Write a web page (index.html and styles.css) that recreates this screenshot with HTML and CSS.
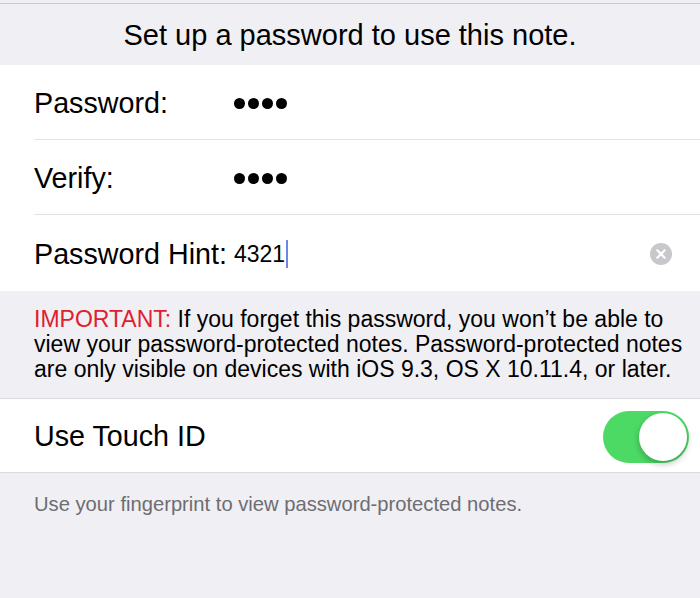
FILE: index.html
```html
<!DOCTYPE html>
<html>
    <head>
        <meta charset="UTF-8">
        <meta name="viewport" content="width=device-width, initial-scale=1.0">
        <title>Lock Note</title>
        <link rel="stylesheet" href="styles.css">
    </head>
    <body>
        <div class="header">Set up a password to use this note.</div>

        <div class="group">
            <div class="row">
                <div class="rowinner">
                    <span class="label">Password:</span>
                    <span class="dots"><i></i><i></i><i></i><i></i></span>
                </div>
            </div>
            <div class="row">
                <div class="rowinner">
                    <span class="label">Verify:</span>
                    <span class="dots"><i></i><i></i><i></i><i></i></span>
                </div>
            </div>
            <div class="row">
                <div class="rowinner last">
                    <span class="label">Password Hint:</span>
                    <span class="value">4321</span><span class="caret"></span>
                    <span class="clear">
                        <svg width="22" height="22" viewBox="0 0 22 22">
                            <circle cx="11" cy="11" r="11" fill="#c7c7cc"/>
                            <path d="M7.3 7.3 L14.7 14.7 M14.7 7.3 L7.3 14.7" stroke="#fff" stroke-width="2.2" stroke-linecap="round"/>
                        </svg>
                    </span>
                </div>
            </div>
        </div>

        <p class="footnote"><span class="important">IMPORTANT:</span> If you forget this password, you won’t be able to view your password-protected notes. Password-protected notes are only visible on devices with iOS 9.3, OS X 10.11.4, or later.</p>

        <div class="group bordered">
            <div class="row">
                <div class="rowinner last">
                    <span class="label">Use Touch ID</span>
                    <span class="switch on"><span class="knob"></span></span>
                </div>
            </div>
        </div>

        <p class="caption">Use your fingerprint to view password-protected notes.</p>
    </body>
</html>
```

FILE: styles.css
```css
* {
    font-family: "Liberation Sans", Arial, sans-serif;
    box-sizing: border-box;
}
body {
    margin: 0;
    background-color: #efeff4;
    color: #000;
}
.header {
    margin-top: 3px;
    border-top: 1px solid #c9c9ce;
    height: 62px;
    display: flex;
    align-items: center;
    justify-content: center;
    font-size: 29px;
    padding-top: 2px;
}
.group {
    background-color: #fff;
}
.bordered {
    border-top: 1px solid #dadadf;
    border-bottom: 1px solid #dadadf;
}
.row {
    padding-left: 34px;
}
.rowinner {
    display: flex;
    align-items: center;
    height: 75px;
    padding-top: 2px;
    border-bottom: 1px solid #e2e2e5;
}
.rowinner.last {
    border-bottom: none;
    height: 76px;
}
.bordered .rowinner.last {
    height: 73px;
}
.label {
    width: 200px;
    flex-shrink: 0;
    font-size: 28.7px;
}
.dots {
    display: flex;
    gap: 3px;
    margin-top: 1px;
}
.dots i {
    width: 11px;
    height: 11px;
    border-radius: 50%;
    background-color: #000;
}
.value {
    font-size: 23px;
}
.caret {
    width: 2px;
    height: 28px;
    margin-left: 1px;
    background-color: #6f86e6;
}
.clear {
    margin-left: auto;
    margin-right: 28px;
    display: flex;
}
.footnote {
    margin: 0;
    padding: 16px 2px 16px 34px;
    font-size: 23px;
    line-height: 25px;
    color: #000;
}
.important {
    color: #e0202e;
}
.switch {
    margin-left: auto;
    margin-right: 11px;
    width: 86px;
    height: 52px;
    border-radius: 26px;
    background-color: #4cd964;
    position: relative;
}
.knob {
    position: absolute;
    top: 2px;
    right: 2px;
    width: 48px;
    height: 48px;
    border-radius: 50%;
    background-color: #fff;
    box-shadow: 0 3px 6px rgba(0, 0, 0, 0.25);
}
.caption {
    margin: 0;
    padding: 20px 0 0 34px;
    font-size: 20.2px;
    line-height: 22px;
    color: #6d6d72;
}
```
